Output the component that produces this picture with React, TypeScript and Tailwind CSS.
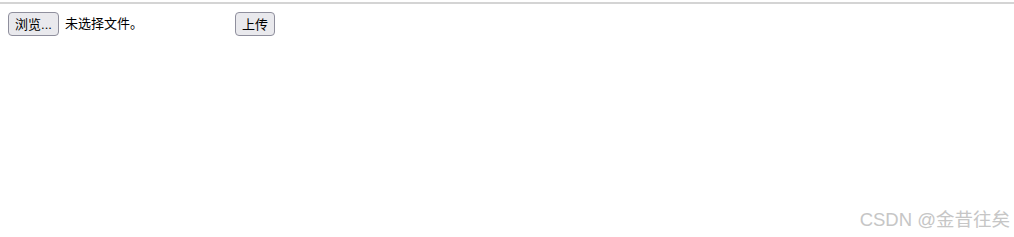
export default function App() {
  return (
    <div className="relative h-[237px] w-[1014px] overflow-hidden bg-white font-['Liberation_Sans','Noto_Sans_CJK_SC',sans-serif]">
      {/* top rule */}
      <div className="mt-[2px] h-[2px] w-full bg-[#d4d4d4]" />

      {/* upload form */}
      <div className="flex items-center pl-[8px] pt-[8px] text-[13px] text-black">
        <button className="flex h-[24px] w-[51px] items-center justify-center rounded-[4px] border border-[#8f8f9d] bg-[#e9e9ed] text-[13px] leading-none">
          浏览...
        </button>
        <span className="ml-[6px] w-[170px]">未选择文件。</span>
        <button className="flex h-[24px] w-[40px] items-center justify-center rounded-[4px] border border-[#8f8f9d] bg-[#e9e9ed] text-[13px] leading-none">
          上传
        </button>
      </div>

      {/* watermark */}
      <div className="absolute bottom-[5px] right-[4px] text-[18.5px] leading-[24px] text-[#c6c6c6]">
        CSDN @金昔往矣
      </div>
    </div>
  );
}
